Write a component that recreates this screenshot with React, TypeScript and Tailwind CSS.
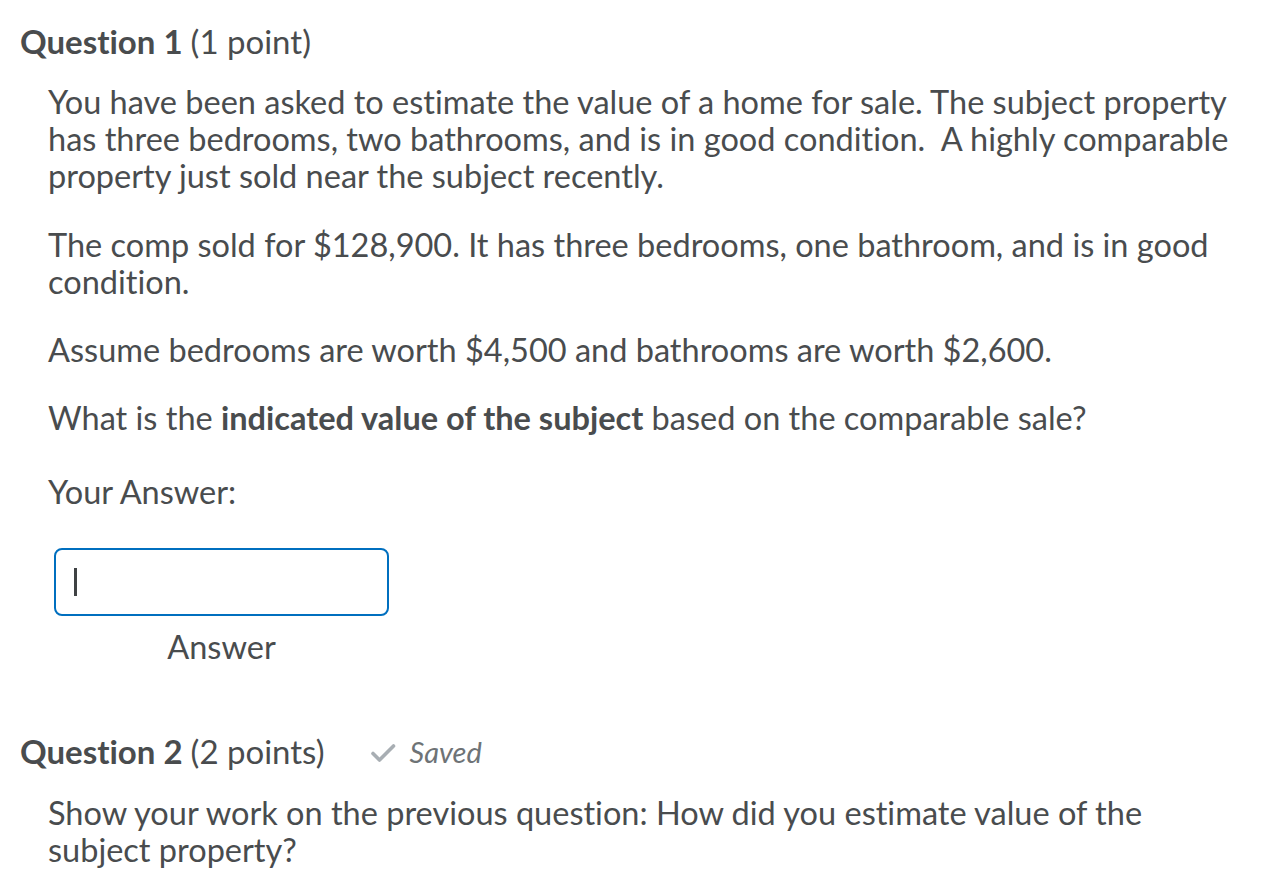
function SavedCheck() {
  return (
    <svg viewBox="0 0 26 20" className="h-[20px] w-[26px]" aria-hidden>
      <polyline
        points="3,10.5 9.5,17 23.5,3"
        fill="none"
        stroke="#a8aeb3"
        strokeWidth={3.6}
        strokeLinecap="round"
        strokeLinejoin="round"
      />
    </svg>
  );
}

function QuestionHeader({ num, points, saved }: { num: number; points: string; saved?: boolean }) {
  return (
    <h2 className="flex items-center text-[33px] leading-[37px] text-[#494c4e]">
      <span className="font-bold">Question {num}</span>
      <span className="ml-[8px]">({points})</span>
      {saved ? (
        <span className="ml-[45px] flex items-center text-[#6e7376]">
          <span className="pt-[2px]">
            <SavedCheck />
          </span>
          <span className="ml-[14px] text-[29px] italic">Saved</span>
        </span>
      ) : null}
    </h2>
  );
}

export default function App() {
  return (
    <div className="min-h-[893px] bg-white pl-[20px] pt-[23px] text-[#494c4e] [font-family:Lato,'Noto_Sans',sans-serif] [font-variant-ligatures:none]">
      <QuestionHeader num={1} points="1 point" />

      <div className="pl-[28px] pr-[20px] text-[32.5px] leading-[37px]">
        <p className="mt-[23px]">
          You have been asked to estimate the value of a home for sale. The subject property
          <br />
          has three bedrooms, two bathrooms, and is in good condition.&nbsp; A highly comparable
          <br />
          property just sold near the subject recently.
        </p>
        <p className="mt-[32px]">
          The comp sold for $128,900. It has three bedrooms, one bathroom, and is in good
          <br />
          condition.
        </p>
        <p className="mt-[31px]">
          Assume bedrooms are worth $4,500 and bathrooms are worth $2,600.
        </p>
        <p className="mt-[31px]">
          What is the <span className="font-bold">indicated value of the subject</span> based on
          the comparable sale?
        </p>
        <p className="mt-[37px]">Your Answer:</p>

        <div className="mt-[38px] ml-[6px] w-[335px]">
          <div className="flex h-[68px] items-center rounded-[8px] border-2 border-[#006fbf] pl-[18px]">
            <div className="h-[28px] w-[2.5px] bg-[#3f4244]" />
          </div>
          <p className="mt-[12px] text-center">Answer</p>
        </div>
      </div>

      <div className="mt-[68px]">
        <QuestionHeader num={2} points="2 points" saved />
      </div>

      <div className="pl-[28px] pr-[20px] text-[32.5px] leading-[37px]">
        <p className="mt-[24px]">
          Show your work on the previous question: How did you estimate value of the
          <br />
          subject property?
        </p>
      </div>
    </div>
  );
}
